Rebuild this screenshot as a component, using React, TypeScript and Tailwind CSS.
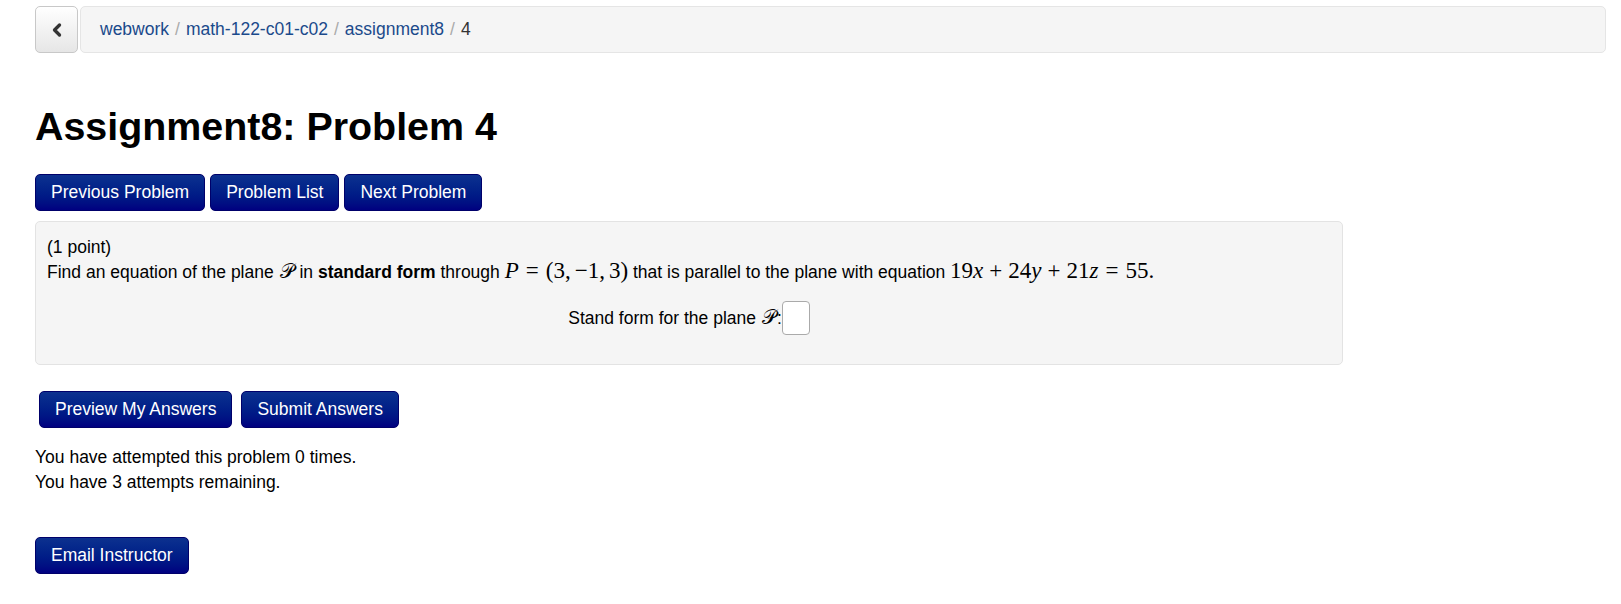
import { ChevronLeft } from "lucide-react";

const sans = { fontFamily: '"Liberation Sans", Arial, sans-serif' };

function Btn({ label, className = "" }: { label: string; className?: string }) {
  return (
    <button
      className={
        "h-[37px] px-[15px] rounded-[5px] border border-[#00006a] bg-gradient-to-b from-[#0d318f] to-[#000080] text-white text-[17.5px] leading-[25px] " +
        className
      }
    >
      {label}
    </button>
  );
}

function I({ children }: { children: string }) {
  return <span className="italic">{children}</span>;
}

function M({ children }: { children: React.ReactNode }) {
  return (
    <span className="text-[23px] leading-[20px] whitespace-nowrap" style={{ fontFamily: '"Liberation Serif", "DejaVu Serif", serif' }}>
      {children}
    </span>
  );
}

function Op({ c, wide = true }: { c: string; wide?: boolean }) {
  return <span className={wide ? "px-[7px]" : "px-[6px]"}>{c}</span>;
}

function Script() {
  return (
    <span className="text-[20px] leading-[20px] mx-[1px]" style={{ fontFamily: '"DejaVu Sans", "Liberation Serif", serif' }}>
      𝒫
    </span>
  );
}

export default function App() {
  return (
    <div className="min-h-screen bg-white text-black pl-[35px] pr-[15px] pt-[6px]" style={sans}>
      {/* breadcrumb */}
      <div className="flex gap-[2px] h-[47px]">
        <button className="w-[43px] h-[47px] flex items-center justify-center rounded-[5px] border border-[#c8c8c8] bg-gradient-to-b from-white to-[#e6e6e6] text-[#333]">
          <ChevronLeft size={20} strokeWidth={4} />
        </button>
        <div className="flex-1 flex items-center rounded-[5px] border border-[#e5e5e5] bg-[#f5f5f5] pl-[19px] text-[17.5px] leading-[25px]">
          <span className="text-[#1b4a8b]">webwork</span>
          <span className="px-[6px] text-[#aaa]">/</span>
          <span className="text-[#1b4a8b]">math-122-c01-c02</span>
          <span className="px-[6px] text-[#aaa]">/</span>
          <span className="text-[#1b4a8b]">assignment8</span>
          <span className="px-[6px] text-[#aaa]">/</span>
          <span className="text-[#333]">4</span>
        </div>
      </div>

      <h2 className="mt-[48px] text-[39.4px] leading-[50px] font-bold">Assignment8: Problem 4</h2>

      <div className="mt-[23px] flex gap-[5px]">
        <Btn label="Previous Problem" />
        <Btn label="Problem List" />
        <Btn label="Next Problem" />
      </div>

      <div className="mt-[10px] w-[1308px] h-[144px] rounded-[5px] border border-[#e3e3e3] bg-[#f5f5f5] px-[11px] pt-[13px] text-[17.5px] leading-[25px]">
        <div>(1 point)</div>
        <div>
          Find an equation of the plane <Script /> in <b>standard form</b> through{" "}
          <M>
            <I>P</I>
            <Op c="=" />
            (3,<span className="pl-[4px]">−1,</span>
            <span className="pl-[4px]">3)</span>
          </M>{" "}
          that is parallel to the plane with equation{" "}
          <M>
            19<I>x</I>
            <Op c="+" wide={false} />
            24<I>y</I>
            <Op c="+" wide={false} />
            21<I>z</I>
            <Op c="=" />
            55.
          </M>
        </div>
        <div className="mt-[16px] flex items-center justify-center">
          <span>
            Stand form for the plane <Script />:
          </span>
          <span className="w-[28px] h-[34px] rounded-[4px] border border-[#aaa] bg-white" />
        </div>
      </div>

      <div className="mt-[26px] ml-[4px] flex gap-[9px]">
        <Btn label="Preview My Answers" />
        <Btn label="Submit Answers" />
      </div>

      <div className="mt-[17px] text-[17.5px] leading-[25px]">
        <div>You have attempted this problem 0 times.</div>
        <div>You have 3 attempts remaining.</div>
      </div>

      <div className="mt-[42px]">
        <Btn label="Email Instructor" />
      </div>
    </div>
  );
}
